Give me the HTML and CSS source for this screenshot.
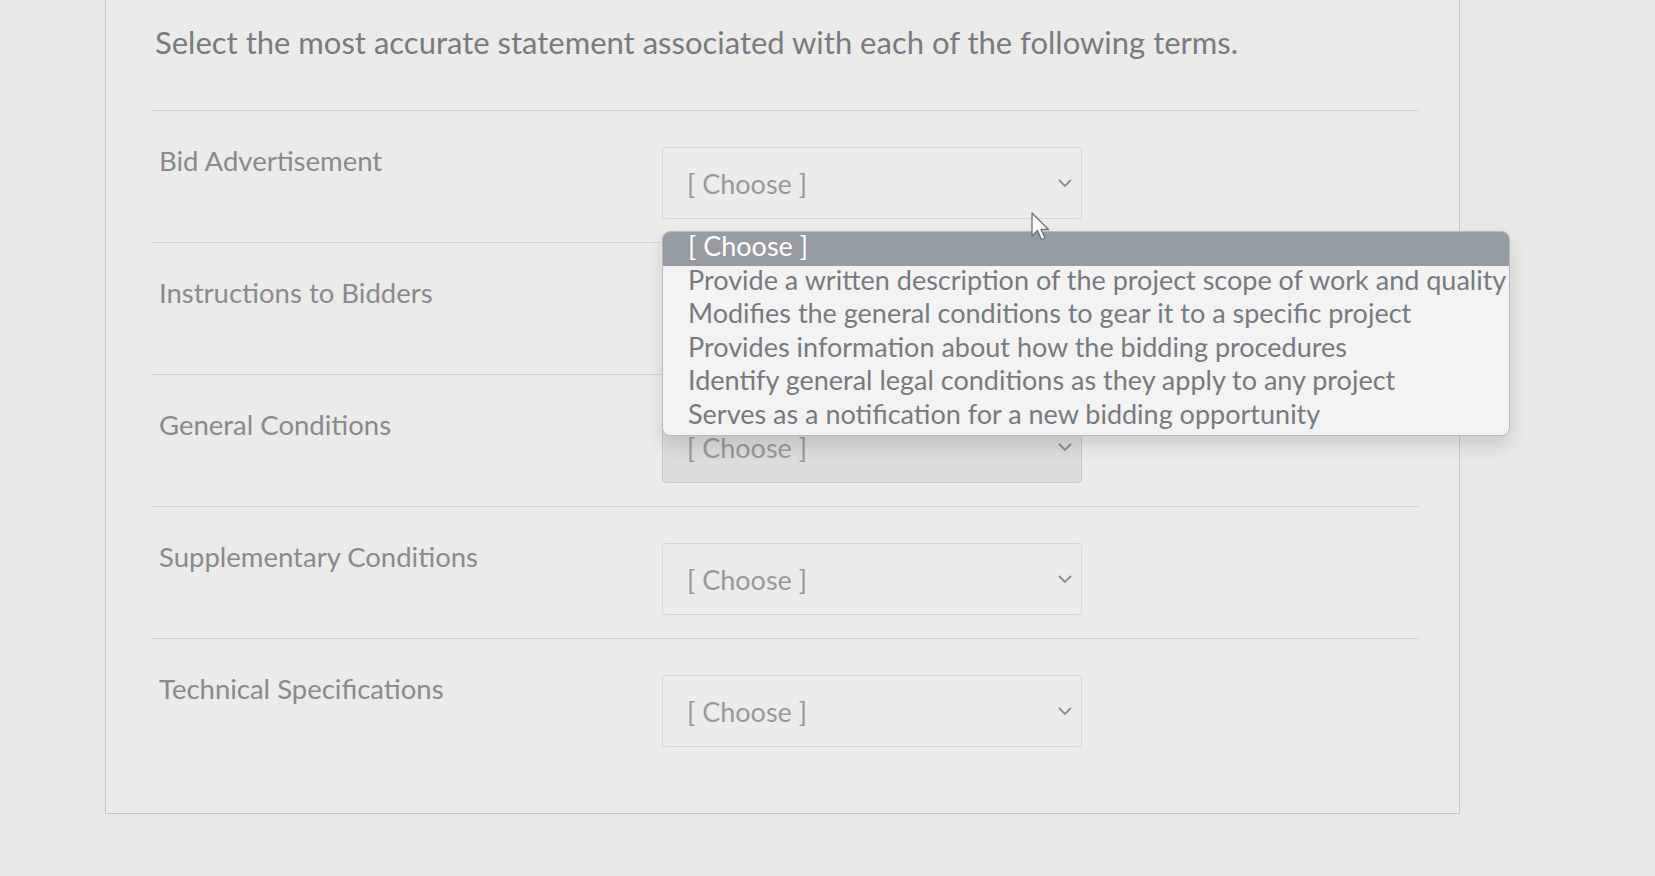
FILE: index.html
```html
<!DOCTYPE html>
<html lang="en">
<head>
  <meta charset="UTF-8">
  <title>Matching question</title>
  <link rel="stylesheet" href="styles.css">
</head>
<body>
  <div class="question">
    <p class="question-text">Select the most accurate statement associated with each of the following terms.</p>

    <div class="answers">
      <div class="answer-row">
        <div class="term">Bid Advertisement</div>
        <div class="picker">
          <div class="select-box">
            <span>[ Choose ]</span>
            <svg class="chevron" width="16" height="10" viewBox="0 0 16 10"><path d="M2 2 L8 8 L14 2" fill="none" stroke="#8a8f94" stroke-width="1.8"/></svg>
          </div>

          <!-- open list for the first select -->
          <ul class="options">
            <li class="selected">[ Choose ]</li>
            <li>Provide a written description of the project scope of work and quality</li>
            <li>Modifies the general conditions to gear it to a specific project</li>
            <li>Provides information about how the bidding procedures</li>
            <li>Identify general legal conditions as they apply to any project</li>
            <li>Serves as a notification for a new bidding opportunity</li>
          </ul>

          <svg class="cursor" width="22" height="32" viewBox="0 0 22 32"><path d="M2 2 L2 25 L7.5 19.5 L11.5 28.5 L15 27 L11 18.5 L18.5 18.5 Z" fill="#fafafa" stroke="#6d7277" stroke-width="1.3" stroke-linejoin="round"/></svg>
        </div>
      </div>

      <div class="answer-row">
        <div class="term">Instructions to Bidders</div>
        <div class="picker">
          <!-- sits under the open list -->
          <div class="select-box covered">
            <span>[ Choose ]</span>
            <svg class="chevron" width="16" height="10" viewBox="0 0 16 10"><path d="M2 2 L8 8 L14 2" fill="none" stroke="#8a8f94" stroke-width="1.8"/></svg>
          </div>
        </div>
      </div>

      <div class="answer-row">
        <div class="term">General Conditions</div>
        <div class="picker">
          <div class="select-box shaded">
            <span>[ Choose ]</span>
            <svg class="chevron" width="16" height="10" viewBox="0 0 16 10"><path d="M2 2 L8 8 L14 2" fill="none" stroke="#8a8f94" stroke-width="1.8"/></svg>
          </div>
        </div>
      </div>

      <div class="answer-row">
        <div class="term">Supplementary Conditions</div>
        <div class="picker">
          <div class="select-box">
            <span>[ Choose ]</span>
            <svg class="chevron" width="16" height="10" viewBox="0 0 16 10"><path d="M2 2 L8 8 L14 2" fill="none" stroke="#8a8f94" stroke-width="1.8"/></svg>
          </div>
        </div>
      </div>

      <div class="answer-row">
        <div class="term">Technical Specifications</div>
        <div class="picker">
          <div class="select-box">
            <span>[ Choose ]</span>
            <svg class="chevron" width="16" height="10" viewBox="0 0 16 10"><path d="M2 2 L8 8 L14 2" fill="none" stroke="#8a8f94" stroke-width="1.8"/></svg>
          </div>
        </div>
      </div>
    </div>
  </div>
</body>
</html>
```

FILE: styles.css
```css
body {
  margin: 0;
  background-color: #e8e8e7;
  font-family: Lato, "Open Sans", sans-serif;
  height: 876px;
  overflow: hidden;
}

.question {
  margin-left: 105px;
  width: 1355px;
  height: 814px;
  box-sizing: border-box;
  padding: 0 40px 0 45px;
  border: 1px solid #c6c7c8;
  border-top: none;
  background-color: #ebebea;
}

.question-text {
  margin: 0;
  height: 110px;
  box-sizing: border-box;
  padding: 22px 0 0 4px;
  font-size: 31px;
  line-height: 40px;
  color: #777c80;
}

.answer-row {
  display: flex;
  height: 132px;
  box-sizing: border-box;
  border-top: 1px solid #d4d5d6;
}

.term {
  width: 511px;
  box-sizing: border-box;
  padding: 33px 0 0 8px;
  font-size: 27.5px;
  line-height: 34px;
  color: #878b8f;
}

.picker {
  position: relative;
  padding-top: 36px;
}

.select-box {
  width: 420px;
  height: 72px;
  box-sizing: border-box;
  display: flex;
  align-items: center;
  justify-content: space-between;
  padding: 0 8px 0 24px;
  border: 1px solid #d5d6d7;
  border-radius: 4px;
  background-color: #ececeb;
  font-size: 27px;
  color: #969a9e;
}

.select-box.shaded {
  background-color: #dcdddd;
  border-color: #c9cacb;
}

.select-box.covered {
  visibility: hidden;
}

.options {
  position: absolute;
  top: 120px;
  left: 0;
  z-index: 2;
  width: 846px;
  margin: 0;
  padding: 0 0 2px;
  list-style: none;
  background-color: #f3f3f3;
  border: 1px solid #b7babd;
  border-radius: 8px;
  box-shadow: 0 10px 18px rgba(0, 0, 0, 0.12);
  font-size: 27px;
  line-height: 27px;
  color: #767b80;
}

.options li {
  padding: 0 0 6.5px 25px;
  white-space: nowrap;
}

.options li.selected {
  background-color: #959ca2;
  color: #fff;
  border-radius: 7px 7px 0 0;
}

.cursor {
  position: absolute;
  top: 100px;
  left: 368px;
  z-index: 3;
}
```
